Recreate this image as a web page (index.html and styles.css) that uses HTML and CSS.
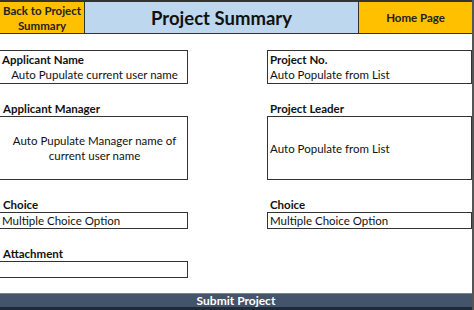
FILE: index.html
```html
<!DOCTYPE html>
<html lang="en">
<head>
  <meta charset="UTF-8">
  <title>Project Summary</title>
  <link rel="stylesheet" href="styles.css">
</head>
<body>
  <div class="sheet">
    <div class="header">
      <a class="nav-btn" href="#">Back to Project<br>Summary</a>
      <h1 class="title">Project Summary</h1>
      <a class="nav-btn" href="#">Home Page</a>
    </div>

    <form class="form">
      <div class="field">
        <div class="box box-inline">
          <label>Applicant Name</label>
          <div class="value center">Auto Pupulate current user name</div>
        </div>
      </div>
      <div class="field">
        <div class="box box-inline">
          <label>Project No.</label>
          <div class="value">Auto Populate from List</div>
        </div>
      </div>

      <div class="field">
        <label>Applicant Manager</label>
        <div class="box box-tall center">Auto Pupulate Manager name of<br>current user name</div>
      </div>
      <div class="field">
        <label>Project Leader</label>
        <div class="box box-tall">Auto Populate from List</div>
      </div>

      <div class="field">
        <label>Choice</label>
        <div class="box">Multiple Choice Option</div>
      </div>
      <div class="field">
        <label>Choice</label>
        <div class="box">Multiple Choice Option</div>
      </div>

      <div class="field">
        <label>Attachment</label>
        <div class="box"></div>
      </div>
    </form>

    <button type="button" class="submit">Submit Project</button>
  </div>
</body>
</html>
```

FILE: styles.css
```css
body {
  margin: 0;
  font-family: Lato, "Open Sans", sans-serif;
  font-size: 11.5px;
  color: #111;
  background: white;
}
.sheet {
  width: 474px;
  height: 310px;
  overflow: hidden;
  border-right: 2px solid #555;
  box-sizing: border-box;
}
.header {
  display: grid;
  grid-template-columns: 84px 1fr 113px;
  height: 34px;
  border-top: 2px solid #333;
  border-bottom: 1px solid #333;
  box-sizing: border-box;
}
.nav-btn {
  display: flex;
  align-items: center;
  justify-content: center;
  text-align: center;
  background: #ffc000;
  color: #222;
  font-weight: bold;
  font-size: 11.5px;
  line-height: 15px;
  text-decoration: none;
}
.title {
  margin: 0;
  display: flex;
  align-items: center;
  justify-content: center;
  background: #bdd7ee;
  border-left: 1px solid #333;
  border-right: 1px solid #333;
  font-size: 18.5px;
  font-weight: bold;
  color: #111;
}
.form {
  display: grid;
  grid-template-columns: 188px 1fr;
  column-gap: 79px;
  row-gap: 17px;
  padding-top: 16px;
}
label {
  display: block;
  font-weight: bold;
  line-height: 15px;
  padding-left: 3px;
}
.box {
  border: 1px solid #333;
  height: 17px;
  line-height: 15px;
  padding-left: 2px;
  box-sizing: border-box;
}
.box-inline {
  height: 34px;
  padding: 1px 0 0;
}
.box-inline .value {
  padding-left: 2px;
  line-height: 15px;
}
.box-inline label {
  padding-left: 2px;
}
.box-tall {
  height: 64px;
  display: flex;
  flex-direction: column;
  justify-content: center;
}
.center {
  text-align: center;
}
.form > .field:nth-child(odd) .box {
  border-left: none;
}
.submit {
  display: block;
  width: 100%;
  margin-top: 15px;
  height: 18px;
  padding: 0;
  border: none;
  border-top: 1px solid #7a8595;
  border-bottom: 4px solid #1f2a38;
  background: #44546a;
  color: white;
  font-family: Lato, "Open Sans", sans-serif;
  font-size: 12px;
  font-weight: bold;
  line-height: 13px;
  cursor: pointer;
}
```
